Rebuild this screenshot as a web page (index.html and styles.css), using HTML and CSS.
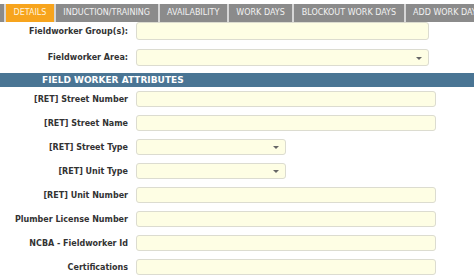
FILE: index.html
```html
<!DOCTYPE html>
<html lang="en">
<head>
  <meta charset="UTF-8">
  <title>Field Worker</title>
  <link rel="stylesheet" href="styles.css">
</head>
<body>
  <div class="tabs">
    <span class="tab stub"></span>
    <span class="tab active">DETAILS</span>
    <span class="tab">INDUCTION/TRAINING</span>
    <span class="tab">AVAILABILITY</span>
    <span class="tab">WORK DAYS</span>
    <span class="tab">BLOCKOUT WORK DAYS</span>
    <span class="tab">ADD WORK DAYS</span>
  </div>

  <div class="form">
    <div class="row first">
      <label class="lbl">Fieldworker Group(s):</label>
      <div class="field wide tall"></div>
    </div>
    <div class="row second">
      <label class="lbl">Fieldworker Area:</label>
      <div class="field wide select"><span class="arrow"></span></div>
    </div>

    <div class="section">FIELD WORKER ATTRIBUTES</div>

    <div class="row">
      <label class="lbl">[RET] Street Number</label>
      <div class="field full"></div>
    </div>
    <div class="row">
      <label class="lbl">[RET] Street Name</label>
      <div class="field full"></div>
    </div>
    <div class="row">
      <label class="lbl">[RET] Street Type</label>
      <div class="field short select"><span class="arrow"></span></div>
    </div>
    <div class="row">
      <label class="lbl">[RET] Unit Type</label>
      <div class="field short select"><span class="arrow"></span></div>
    </div>
    <div class="row">
      <label class="lbl">[RET] Unit Number</label>
      <div class="field full"></div>
    </div>
    <div class="row">
      <label class="lbl">Plumber License Number</label>
      <div class="field full"></div>
    </div>
    <div class="row">
      <label class="lbl">NCBA - Fieldworker Id</label>
      <div class="field full"></div>
    </div>
    <div class="row">
      <label class="lbl">Certifications</label>
      <div class="field full"></div>
    </div>
  </div>
</body>
</html>
```

FILE: styles.css
```css
body{
  margin:0;
  font-family: "DejaVu Sans", sans-serif;
  background:#fff;
  overflow:hidden;
}
.tabs{
  display:flex;
  margin-top:4px;
  height:18px;
  white-space:nowrap;
}
.tab{
  flex:none;
  background-color:#8b8b8b;
  color:#f2f2f2;
  font-size:8px;
  line-height:18px;
  padding:0 7.5px;
  border-right:2px solid #d6d6d6;
}
.tab.stub{
  width:4px;
  padding:0;
}
.tab.active{
  background-color:#f7a41d;
  color:#fff3dc;
}
.form{
  display:flex;
  flex-direction:column;
}
.row{
  display:flex;
  align-items:center;
  height:16px;
  margin-bottom:8px;
}
.row.first{
  height:18px;
  margin-bottom:9px;
}
.row.second{
  height:17px;
  margin-bottom:7px;
}
.lbl{
  width:128px;
  text-align:right;
  font-size:8px;
  font-weight:bold;
  color:#333;
  margin-right:8px;
  white-space:nowrap;
}
.field{
  box-sizing:border-box;
  height:100%;
  background-color:#fefee4;
  border:1px solid #dcdcd0;
  border-radius:3px;
  position:relative;
}
.wide{ width:293px; }
.full{ width:300px; }
.short{ width:150px; }
.arrow{
  position:absolute;
  right:6px;
  top:50%;
  margin-top:-1px;
  border-left:3px solid transparent;
  border-right:3px solid transparent;
  border-top:3px solid #666;
}
.section{
  background-color:#4a7594;
  color:#fff;
  font-size:9px;
  font-weight:bold;
  height:14px;
  line-height:14px;
  padding-left:42px;
  margin-bottom:4px;
}
```
